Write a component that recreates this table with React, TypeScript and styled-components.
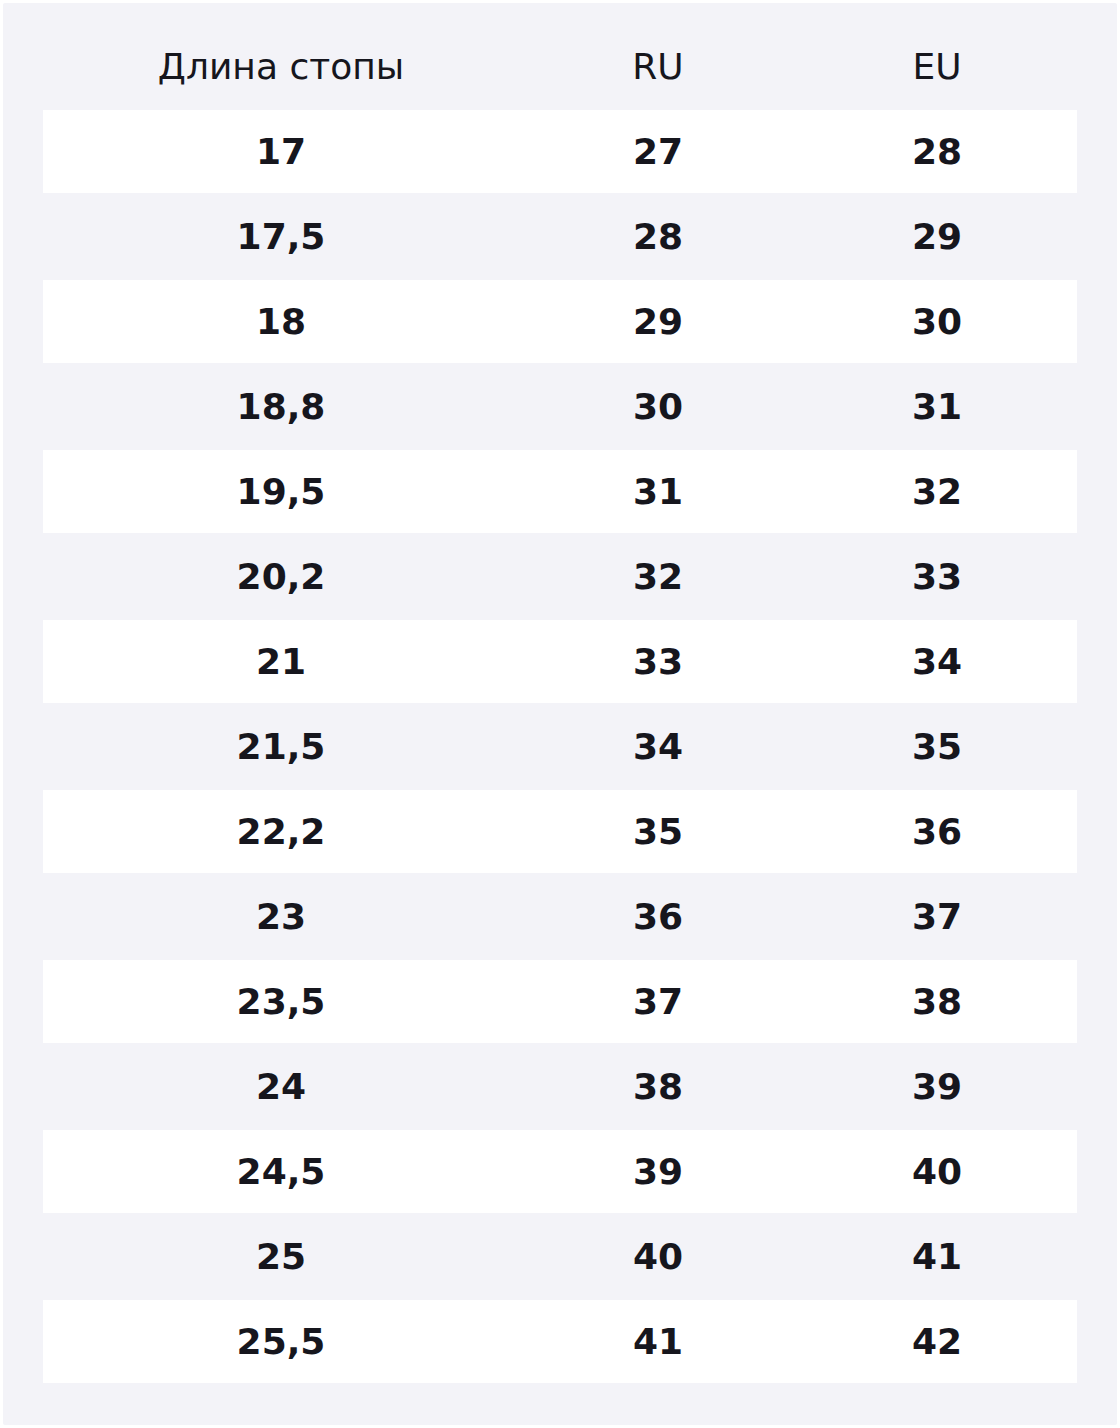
import React from "react";
import styled, { createGlobalStyle } from "styled-components";

const GlobalStyle = createGlobalStyle`
  html, body {
    margin: 0;
    padding: 0;
    background: #ffffff;
  }
  body {
    padding: 3px;
    font-family: "DejaVu Sans", "Liberation Sans", sans-serif;
    color: #16161d;
  }
`;

const Panel = styled.section`
  box-sizing: border-box;
  width: 1114px;
  height: 1422px;
  background: #f3f3f8;
  border-radius: 2px;
  padding: 0 40px;
  display: flex;
  flex-direction: column;
`;

const Grid = styled.div`
  display: grid;
  grid-template-columns: 476px 278px 1fr;
  align-items: center;
`;

const HeaderRow = styled(Grid)`
  height: 107px;
  padding-top: 21px;
  box-sizing: border-box;
`;

const HeadCell = styled.div`
  text-align: center;
  font-size: 36px;
  font-weight: 400;
  line-height: 1;
`;

const Body = styled.div`
  display: flex;
  flex-direction: column;
  gap: 2px;
`;

const Row = styled(Grid)<{ $striped: boolean }>`
  height: 83px;
  background: ${(p) => (p.$striped ? "#ffffff" : "transparent")};
`;

const Cell = styled.div`
  text-align: center;
  font-size: 36px;
  font-weight: 700;
  line-height: 1;
`;

const rows: [string, string, string][] = [
  ["17", "27", "28"],
  ["17,5", "28", "29"],
  ["18", "29", "30"],
  ["18,8", "30", "31"],
  ["19,5", "31", "32"],
  ["20,2", "32", "33"],
  ["21", "33", "34"],
  ["21,5", "34", "35"],
  ["22,2", "35", "36"],
  ["23", "36", "37"],
  ["23,5", "37", "38"],
  ["24", "38", "39"],
  ["24,5", "39", "40"],
  ["25", "40", "41"],
  ["25,5", "41", "42"],
];

export default function App() {
  return (
    <>
      <GlobalStyle />
      <Panel>
        <HeaderRow>
          <HeadCell>Длина стопы</HeadCell>
          <HeadCell>RU</HeadCell>
          <HeadCell>EU</HeadCell>
        </HeaderRow>
        <Body>
          {rows.map((r, i) => (
            <Row key={i} $striped={i % 2 === 0}>
              <Cell>{r[0]}</Cell>
              <Cell>{r[1]}</Cell>
              <Cell>{r[2]}</Cell>
            </Row>
          ))}
        </Body>
      </Panel>
    </>
  );
}
